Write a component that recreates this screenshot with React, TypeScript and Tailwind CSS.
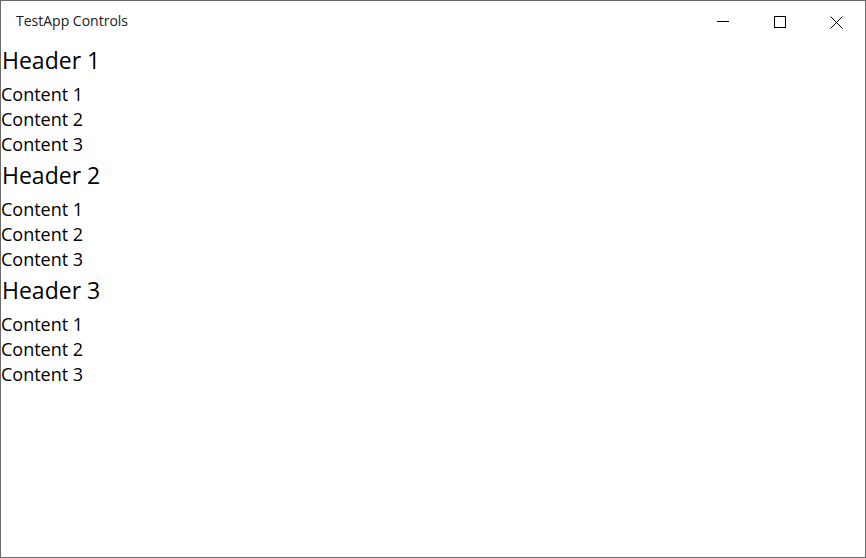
import React from "react";

const sections = ["Header 1", "Header 2", "Header 3"];

export default function App() {
  return (
    <div className="w-[866px] h-[558px] border border-[#6b6b6b] bg-white flex flex-col overflow-hidden" style={{ fontFamily: '"Open Sans", "Noto Sans", sans-serif' }}>
      <div className="h-[41px] shrink-0 flex items-start">
        <div className="pl-[15px] pt-[10px] text-[14px] leading-[20px] text-[#1a1a1a]">TestApp Controls</div>
        <div className="ml-auto flex">
          <div className="w-[57px] h-[41px] flex items-start justify-center pt-[15px]">
            <svg width="12" height="12" viewBox="0 0 12 12">
              <line x1="0" y1="5.5" x2="12" y2="5.5" stroke="#000" strokeWidth="1" />
            </svg>
          </div>
          <div className="w-[57px] h-[41px] flex items-start justify-center pt-[15px]">
            <svg width="12" height="12" viewBox="0 0 12 12">
              <rect x="0.5" y="0.5" width="11" height="11" fill="none" stroke="#000" strokeWidth="1" />
            </svg>
          </div>
          <div className="w-[57px] h-[41px] flex items-start justify-center pt-[15px]">
            <svg width="13" height="13" viewBox="0 0 13 13">
              <path d="M0.5 0.5 L12.5 12.5 M12.5 0.5 L0.5 12.5" stroke="#000" strokeWidth="1" fill="none" />
            </svg>
          </div>
        </div>
      </div>
      <div className="flex flex-col text-black">
        {sections.map((h) => (
          <div key={h} className="flex flex-col">
            <div className="h-[40px] text-[23px] leading-[37px] pl-[1px]">{h}</div>
            {["Content 1", "Content 2", "Content 3"].map((c) => (
              <div key={c} className="h-[25px] text-[18px] leading-[25px]">{c}</div>
            ))}
          </div>
        ))}
      </div>
    </div>
  );
}
